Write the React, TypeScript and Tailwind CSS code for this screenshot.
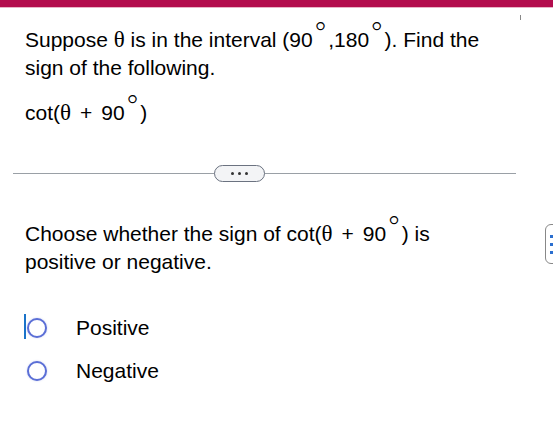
import React from "react";

const Deg: React.FC = () => (
  <span
    className="relative -top-[3px] text-[31px] leading-[0] font-extralight"
    style={{ fontFamily: '"DejaVu Sans", sans-serif' }}
  >
    °
  </span>
);

const Theta: React.FC = () => (
  <span className="text-[23px]" style={{ fontFamily: '"Liberation Serif", "Times New Roman", serif' }}>
    θ
  </span>
);

const Expr: React.FC = () => (
  <>
    cot(<Theta />
    <span className="mx-[9px]">+</span>90<Deg />)
  </>
);

const Radio: React.FC<{ label: string; focused?: boolean }> = ({ label, focused }) => (
  <label className="relative flex items-center h-[43px]">
    {focused && <span className="absolute left-[-1px] top-[8px] w-[2px] h-[25px] bg-[#1a73c9]" />}
    <span className="w-[20px] h-[20px] rounded-full border-2 border-[#5b6fd6] bg-white ml-[2px] shadow-[0_0_2px_rgba(91,111,214,0.35)]" />
    <span className="ml-[29px] text-[21px] text-black">{label}</span>
  </label>
);

const App: React.FC = () => {
  return (
    <div
      className="relative w-[553px] h-[445px] bg-white overflow-hidden"
      style={{ fontFamily: '"Liberation Sans", Arial, sans-serif' }}
    >
      <div className="h-[7px] bg-[#b30c4d]" />
      <div className="h-[1px] bg-[#e9b3c6]" />

      <div className="absolute left-[520px] top-[15px] w-[1px] h-[5px] bg-[#888]" />

      <div className="pl-[25px] w-[505px] pt-[18px] text-[21px] leading-[28px] text-black">
        <p>
          Suppose <Theta /> is in the interval (90<Deg />,180<Deg />). Find the sign of the following.
        </p>
        <p className="mt-[17px]">
          <Expr />
        </p>
      </div>

      <div className="relative mx-[13px] mt-[38px] w-[503px] h-[17px] flex items-center">
        <div className="w-full h-[1px] bg-[#9aa0a6]" />
        <div className="absolute left-[201px] top-0 w-[51px] h-[17px] rounded-full border border-[#6b7280] bg-[#f3f4f6] flex items-center justify-center gap-[4px]">
          <span className="w-[3px] h-[3px] bg-[#333] rounded-full" />
          <span className="w-[3px] h-[3px] bg-[#333] rounded-full" />
          <span className="w-[3px] h-[3px] bg-[#333] rounded-full" />
        </div>
      </div>

      <div className="pl-[25px] w-[500px] mt-[38px] text-[21px] leading-[28px] text-black">
        <p>
          Choose whether the sign of <Expr /> is positive or negative.
        </p>
      </div>

      <div className="pl-[25px] mt-[30px] flex flex-col">
        <Radio label="Positive" focused />
        <Radio label="Negative" />
      </div>

      <div className="absolute left-[545px] top-[224px] w-[20px] h-[40px] rounded-[6px] border border-[#888] bg-white flex flex-col items-start justify-center gap-[5px] pl-[4px]">
        <span className="w-[3px] h-[3px] bg-[#2b6fcf]" />
        <span className="w-[3px] h-[3px] bg-[#2b6fcf]" />
        <span className="w-[3px] h-[3px] bg-[#2b6fcf]" />
      </div>
    </div>
  );
};

export default App;
